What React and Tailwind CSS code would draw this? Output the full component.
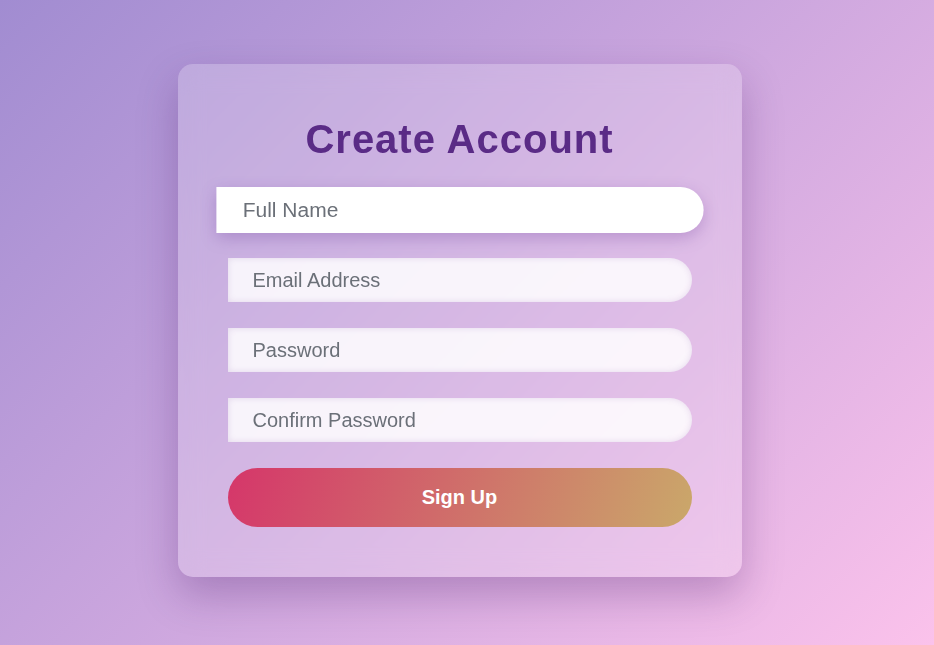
import { useState } from "react";

const fields = [
  { name: "email", type: "email", placeholder: "Email Address" },
  { name: "password", type: "password", placeholder: "Password" },
  { name: "confirm", type: "password", placeholder: "Confirm Password" },
];

const SignUpPage = () => {
  const [values, setValues] = useState({});

  const onChange = (e) =>
    setValues((v) => ({ ...v, [e.target.name]: e.target.value }));

  return (
    <div className="min-h-screen flex items-center justify-center pr-[15px] pb-[4px] bg-linear-135 from-[#a18cd1] to-[#fbc2eb] font-[family-name:'Liberation_Sans',Arial,sans-serif] leading-[1.15]">
      {/* Card kính mờ */}
      <div className="w-[564px] px-[50px] pt-[52px] pb-[50px] rounded-[15px] bg-white/20 shadow-[0_18px_40px_rgba(70,20,100,0.28)] backdrop-blur-md">
        <h2 className="text-center text-[40px] leading-[46px] font-bold tracking-[1px] text-[#5a2b86] mb-[26px]">
          Create Account
        </h2>

        <form className="flex flex-col gap-[26px]" onSubmit={(e) => e.preventDefault()}>
          {/* Ô đang được focus */}
          <input
            name="fullName"
            type="text"
            placeholder="Full Name"
            value={values.fullName || ""}
            onChange={onChange}
            className="h-[44px] px-[25px] text-[20px] text-[#333] placeholder:text-[#6b7078] bg-white rounded-r-[25px] outline-none scale-105 shadow-[0_5px_15px_rgba(90,40,140,0.25)]"
          />
          {fields.map((f) => (
            <input
              key={f.name}
              name={f.name}
              type={f.type}
              placeholder={f.placeholder}
              value={values[f.name] || ""}
              onChange={onChange}
              className="h-[44px] px-[25px] text-[20px] text-[#333] placeholder:text-[#6b7078] bg-white/85 rounded-r-[25px] outline-none shadow-[inset_0_0_6px_rgba(120,80,160,0.18)] focus:bg-white focus:scale-105 transition-all"
            />
          ))}
          <button
            type="submit"
            className="h-[59px] rounded-full bg-linear-[110deg] from-[#d5366a] to-[#caa86a] text-white text-[20px] font-bold"
          >
            Sign Up
          </button>
        </form>
      </div>
    </div>
  );
};

export default SignUpPage;
